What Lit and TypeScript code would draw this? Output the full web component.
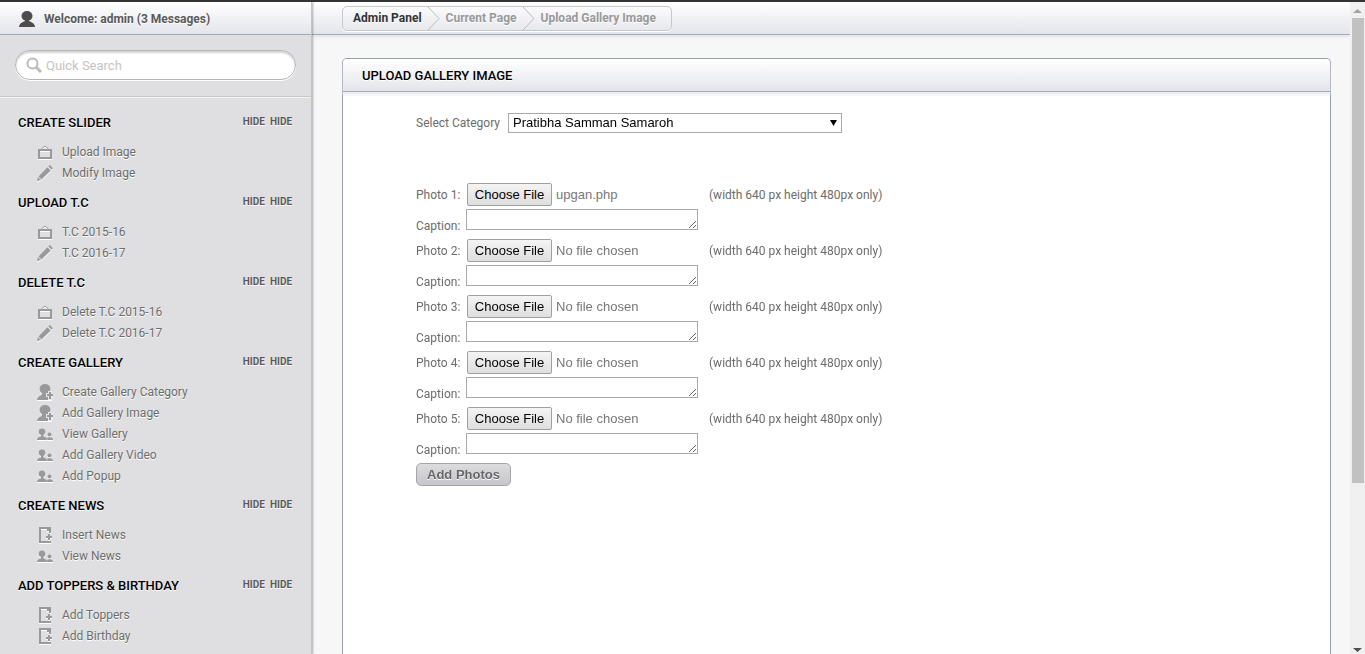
import { LitElement, html, css, svg } from "lit";
import { customElement, property } from "lit/decorators.js";

type IconName = "frame" | "pencil" | "user-add" | "users" | "page-add";
interface Section {
  title: string;
  items: { label: string; icon: IconName }[];
}

const SECTIONS: Section[] = [
  { title: "CREATE SLIDER", items: [{ label: "Upload Image", icon: "frame" }, { label: "Modify Image", icon: "pencil" }] },
  { title: "UPLOAD T.C", items: [{ label: "T.C 2015-16", icon: "frame" }, { label: "T.C 2016-17", icon: "pencil" }] },
  { title: "DELETE T.C", items: [{ label: "Delete T.C 2015-16", icon: "frame" }, { label: "Delete T.C 2016-17", icon: "pencil" }] },
  {
    title: "CREATE GALLERY",
    items: [
      { label: "Create Gallery Category", icon: "user-add" },
      { label: "Add Gallery Image", icon: "user-add" },
      { label: "View Gallery", icon: "users" },
      { label: "Add Gallery Video", icon: "users" },
      { label: "Add Popup", icon: "users" },
    ],
  },
  { title: "CREATE NEWS", items: [{ label: "Insert News", icon: "page-add" }, { label: "View News", icon: "users" }] },
  { title: "ADD TOPPERS & BIRTHDAY", items: [{ label: "Add Toppers", icon: "page-add" }, { label: "Add Birthday", icon: "page-add" }] },
];

const ICONS = {
  frame: svg`<path fill-rule="evenodd" d="M1 5h14v10H1zM3 7v6h10V7z"/><path d="M4.500 5L8 2l3.500 3" fill="none" stroke="#999"/>`,
  pencil: svg`<path d="M0 16l1-4 3 3zM1.500 11.500L10.500 2.300l3.200 3.200L4.500 14.500zM11.300 1.500L12.800 0 16 3.200l-1.500 1.500z"/>`,
  "user-add": svg`<ellipse cx="8" cy="5" rx="5.500" ry="5"/><path d="M0 16q0-3 4-4.500l1-1V9h6v2l4 5z"/><path d="M12 8h2v2h2v2h-2v3h-2v-3h-2v-2h2z" stroke="#e8e8ea" stroke-width="2" paint-order="stroke"/>`,
  users: svg`<circle cx="5" cy="5.800" r="3.300"/><path d="M0 14q0-3 4-3.500V8h2.500v2.500q3.500.5 3.500 3.500z"/><circle cx="12.500" cy="8.500" r="2"/><path d="M10.500 14q0-1-1-2l2.500-.8h1q3 .3 3 2.800z"/>`,
  "page-add": svg`<path d="M2 0h9v2H4v12h10v2H2zM10 0h4v6h-2V4h-2zM11 7h2v2h2v2h-2v2h-2v-2H9V9h2z"/>`,
};

@customElement("side-section")
class SideSection extends LitElement {
  @property({ attribute: false }) section!: Section;

  static styles = css`
    :host { display: block; }
    .head { display: flex; justify-content: space-between; align-items: center; height: 20px; margin-bottom: 8px; }
    h2 { margin: 0; font-size: 13px; font-weight: 500; line-height: 20px; color: #000; text-shadow: 0 1px 0 #fff; }
    button { display: flex; gap: 5px; margin: 0 0 2px; padding: 0; border: 0; background: none; font: 700 10px/16px Roboto, sans-serif; color: #5a5a5a; text-shadow: 0 1px 0 #fff; }
    ul { list-style: none; margin: 0; padding: 0 0 0 19px; }
    a { display: flex; align-items: center; gap: 9px; height: 21px; color: #6c6c6c; text-decoration: none; font-size: 12px; text-shadow: 0 1px 0 #fff; }
    svg { width: 16px; height: 16px; margin-top: 1px; fill: #999; filter: drop-shadow(0 1px 0 #fff); }
  `;

  render() {
    return html`
      <div class="head"><h2>${this.section.title}</h2><button type="button"><span>HIDE</span> <span>HIDE</span></button></div>
      <ul>
        ${this.section.items.map(
          (i) => html`<li><a href="#"><svg viewBox="0 0 16 16" aria-hidden="true">${ICONS[i.icon]}</svg>${i.label}</a></li>`
        )}
      </ul>`;
  }
}

@customElement("app-root")
class AppRoot extends LitElement {
  static styles = css`
    :host { display: flex; flex-direction: column; height: 100vh; overflow: hidden; box-sizing: border-box; border-top: 2px solid #333; background: #f7f7f7; color: #6c6c6c; font: 12px/16px Roboto, sans-serif; }
    * { box-sizing: border-box; }
    .shell { display: flex; flex: 1; min-height: 0; }
    .side { flex: none; width: 312px; overflow: hidden; background: #dfdfe1; border-right: 1px solid #c4c4c6; box-shadow: 1px 0 2px rgba(0, 0, 0, 0.3); z-index: 1; }
    .bar { display: flex; align-items: center; height: 33px; background: linear-gradient(#fff, #e4e5eb); border-bottom: 1px solid #a3abbb; }
    .welcome { gap: 9px; padding-left: 19px; font-weight: 700; color: #5a5a5a; text-shadow: 0 1px 0 #fff; }
    .welcome span { padding-top: 2px; }
    .welcome svg { width: 16px; height: 16px; margin-top: 1px; fill: #4d4d4d; }
    .search { padding: 15px; border-bottom: 1px solid #c6c6c8; }
    .box { display: flex; align-items: center; gap: 4px; height: 30px; margin-bottom: 1px; padding: 0 10px; border: 1px solid #b5b5b7; border-radius: 15px; background: #fff; box-shadow: inset 0 2px 2px #d4d4d4, 0 1px 0 #fff; }
    .box svg { flex: none; width: 16px; height: 16px; }
    .box input { flex: 1; min-width: 0; border: 0; padding: 1px 0 0; outline: 0; background: none; font: 13px/16px Roboto, sans-serif; }
    .box input::placeholder { color: #c4c4c4; opacity: 1; }
    .nav { display: flex; flex-direction: column; gap: 10px; padding: 15px 19px 0 18px; border-top: 1px solid #f4f4f5; }
    .main { flex: 1; min-width: 0; display: flex; flex-direction: column; }
    .top { flex: none; padding-left: 30px; box-shadow: 0 1px 4px #d8dae2; }
    .crumbs { display: flex; height: 25px; margin: 0; padding: 0 15px 0 10px; list-style: none; border: 1px solid #c8c8ca; border-radius: 5px; font-weight: 700; line-height: 22px; box-shadow: 0 1px 0 #fff; text-shadow: 0 1px 0 #fff; }
    .crumbs li { display: flex; }
    .crumbs a { color: #999; text-decoration: none; }
    .crumbs .home { color: #333; }
    .crumbs svg { width: 12px; height: 23px; margin: 0 6px; fill: none; stroke: #bbb; }
    .panel { flex: 1; margin: 23px 19px 0 30px; border: 1px solid #989eae; border-bottom: 0; border-radius: 5px 5px 0 0; background: #fff; }
    .panel h1 { margin: 0; padding-left: 19px; height: 33px; font-size: 13px; font-weight: 500; line-height: 34px; color: #000; border-bottom: 1px solid #a3a9b8; border-radius: 4px 4px 0 0; background: linear-gradient(#fff, #e4e5eb); box-shadow: 0 3px 3px #ececf0; text-shadow: 0 1px 0 #fff; }
    form { padding: 21px 20px 0 73px; }
    .category { display: grid; grid-template-columns: 92px 334px; align-items: center; margin-bottom: 50px; }
    .select { position: relative; }
    select { appearance: none; display: block; width: 100%; height: 20px; padding: 0 20px 0 4px; border: 1px solid #a9a9a9; border-radius: 0; background: #fff; color: #000; font: 13px/18px "Liberation Sans", Arial, sans-serif; }
    .select svg { position: absolute; right: 5px; top: 7px; width: 7px; height: 6px; pointer-events: none; }
    .photo { display: grid; grid-template-columns: 50px 232px 1fr; grid-template-rows: 23px 22px; row-gap: 3px; margin-bottom: 8px; align-items: center; }
    .hint { padding-left: 11px; }
    .caption { align-self: end; line-height: 10px; }
    input[type="file"] { width: 100%; padding-left: 1px; color: #777; font: 13px/21px "Liberation Sans", Arial, sans-serif; }
    input::file-selector-button { width: 85px; height: 23px; margin: 0 4px 0 0; padding: 0; border: 1px solid #a0a0a0; border-radius: 2px; background: linear-gradient(#f4f4f4, #dedede); color: #000; font: 13px/21px "Liberation Sans", Arial, sans-serif; }
    textarea { display: block; align-self: start; width: 100%; height: 21px; margin: 0; padding: 2px; border: 1px solid #a9a9a9; border-radius: 0; background: #fff; font: 12px/16px Roboto, sans-serif; resize: both; }
    .submit { height: 23px; padding: 0 10px; border: 1px solid #a6a6a8; border-radius: 5px; background: linear-gradient(#dcdcde, #c6c6cb); color: #666; font: 700 13px/20px "Liberation Sans", Arial, sans-serif; text-shadow: 0 1px 0 #fff; }
    .scroll { flex: none; display: flex; flex-direction: column; align-items: center; width: 15px; background: #f0f0f0; }
    .scroll svg { flex: none; width: 9px; height: 16px; }
    .thumb { flex: 465; width: 12px; background: #c1c1c1; }
    .rest { flex: 155; }
  `;

  firstUpdated() {
    const transfer = new DataTransfer();
    transfer.items.add(new File([""], "upgan.php"));
    const first = this.renderRoot.querySelector<HTMLInputElement>("#photo1");
    if (first) first.files = transfer.files;
  }

  render() {
    const arrow = html`<svg viewBox="0 0 12 23" aria-hidden="true"><path d="M0 0l11 11.500L0 23" /></svg>`;
    return html`
      <div class="shell">
        <aside class="side">
          <div class="bar welcome">
            <svg viewBox="0 0 16 16" aria-hidden="true"><ellipse cx="8" cy="5" rx="5.500" ry="5" /><path d="M6 9h4v1q6 2 6 6H0q0-4 6-6z" /></svg>
            <span>Welcome: admin (3 Messages)</span>
          </div>
          <div class="search">
            <div class="box">
              <svg viewBox="0 0 16 16" fill="none" stroke="#bbb" aria-hidden="true">
                <circle cx="6.500" cy="6.500" r="5" stroke-width="2" /><path d="M10.500 10.500L15 15" stroke-width="3" />
              </svg>
              <input type="text" placeholder="Quick Search" aria-label="Quick Search" />
            </div>
          </div>
          <nav class="nav">${SECTIONS.map((s) => html`<side-section .section=${s}></side-section>`)}</nav>
        </aside>
        <main class="main">
          <div class="bar top">
            <ol class="crumbs">
              <li><a class="home" href="#">Admin Panel</a>${arrow}</li>
              <li><a href="#">Current Page</a>${arrow}</li>
              <li><a href="#">Upload Gallery Image</a></li>
            </ol>
          </div>
          <section class="panel">
            <h1>UPLOAD GALLERY IMAGE</h1>
            <form @submit=${(e: Event) => e.preventDefault()}>
              <div class="category">
                <label for="category">Select Category</label>
                <div class="select">
                  <select id="category"><option>Pratibha Samman Samaroh</option></select>
                  <svg viewBox="0 0 7 6" aria-hidden="true"><path d="M0 0h7L3.500 6z" /></svg>
                </div>
              </div>
              ${[1, 2, 3, 4, 5].map(
                (n) => html`<div class="photo">
                  <label for="photo${n}">Photo ${n}:</label>
                  <input id="photo${n}" type="file" />
                  <span class="hint">(width 640 px height 480px only)</span>
                  <label class="caption" for="caption${n}">Caption:</label>
                  <textarea id="caption${n}"></textarea>
                </div>`
              )}
              <button class="submit" type="submit">Add Photos</button>
            </form>
          </section>
        </main>
        <div class="scroll" aria-hidden="true">
          <svg viewBox="0 0 9 16"><path d="M4.500 7L9 11H0z" fill="#a3a3a3" /></svg>
          <div class="thumb"></div>
          <div class="rest"></div>
          <svg viewBox="0 0 9 16"><path d="M0 10h9l-4.500 4z" fill="#505050" /></svg>
        </div>
      </div>`;
  }
}
